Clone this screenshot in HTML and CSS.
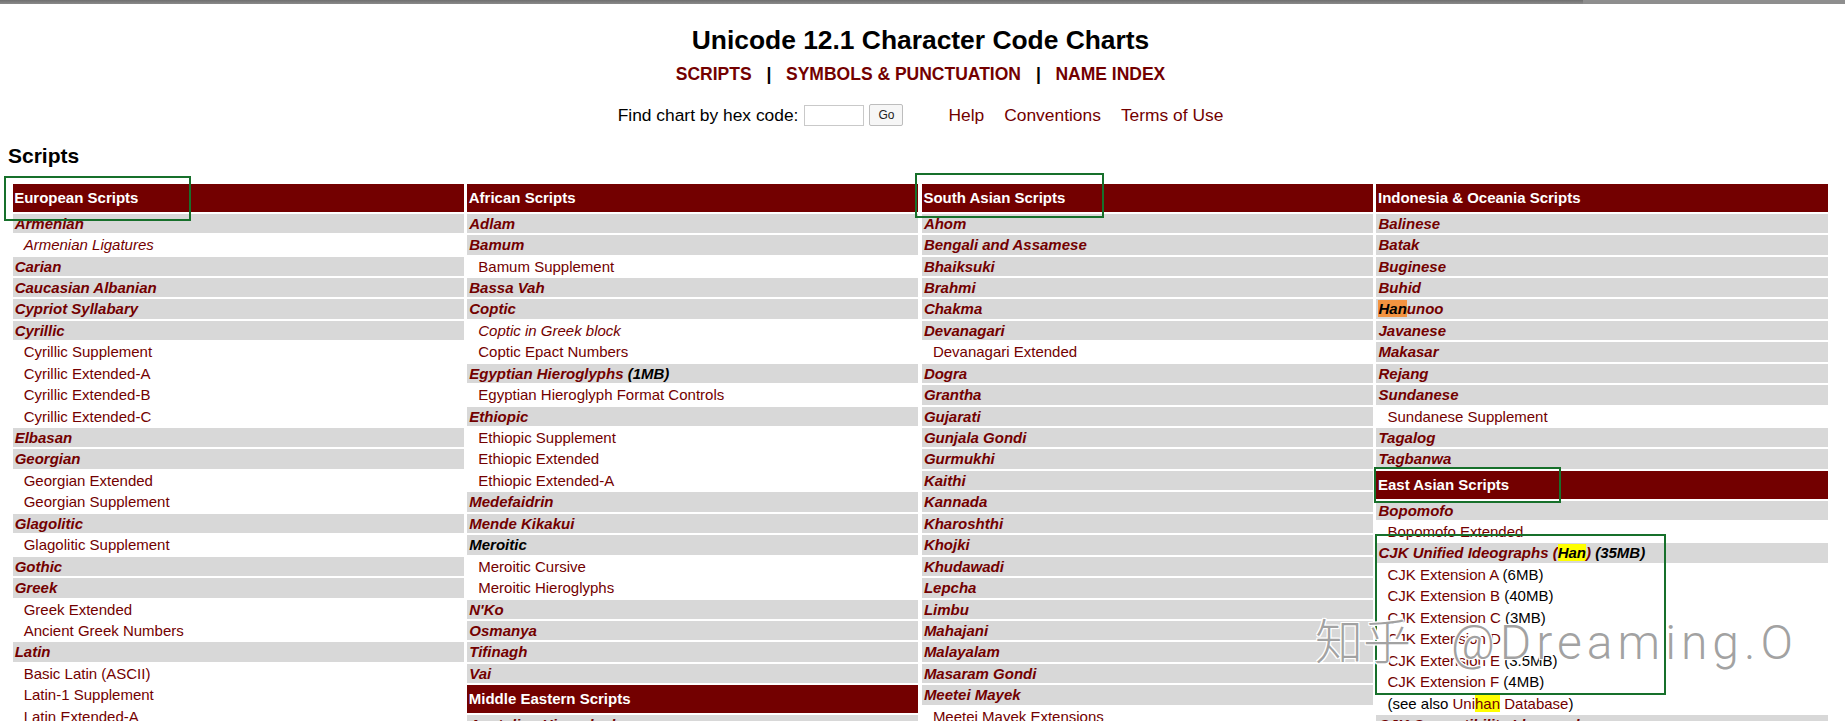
FILE: index.html
```html
<!DOCTYPE html>
<html lang="en">
<head>
<meta charset="utf-8">
<title>Unicode 12.1 Character Code Charts</title>
<link rel="stylesheet" href="styles.css">
</head>
<body>
<div class="topbar"><div class="topbar-dark"></div><div class="topbar-light"></div></div>
<div class="page">
  <h1 class="title">Unicode 12.1 Character Code Charts</h1>
  <nav class="nav">
    <a href="#">SCRIPTS</a><span class="sep">|</span><a href="#">SYMBOLS &amp; PUNCTUATION</a><span class="sep">|</span><a href="#">NAME INDEX</a>
  </nav>
  <div class="find">
    <span class="find-label">Find chart by hex code:</span>
    <span class="find-input"></span>
    <span class="find-go">Go</span>
    <a class="find-link first" href="#">Help</a>
    <a class="find-link" href="#">Conventions</a>
    <a class="find-link" href="#">Terms of Use</a>
  </div>
  <h2 class="section">Scripts</h2>
  <div class="cols">
    <div class="col">
      <div class="hd">European Scripts</div>
      <div class="r g"><a href="#">Armenian</a></div>
      <div class="r s"><a class="it" href="#">Armenian Ligatures</a></div>
      <div class="r g"><a href="#">Carian</a></div>
      <div class="r g"><a href="#">Caucasian Albanian</a></div>
      <div class="r g"><a href="#">Cypriot Syllabary</a></div>
      <div class="r g"><a href="#">Cyrillic</a></div>
      <div class="r s"><a href="#">Cyrillic Supplement</a></div>
      <div class="r s"><a href="#">Cyrillic Extended-A</a></div>
      <div class="r s"><a href="#">Cyrillic Extended-B</a></div>
      <div class="r s"><a href="#">Cyrillic Extended-C</a></div>
      <div class="r g"><a href="#">Elbasan</a></div>
      <div class="r g"><a href="#">Georgian</a></div>
      <div class="r s"><a href="#">Georgian Extended</a></div>
      <div class="r s"><a href="#">Georgian Supplement</a></div>
      <div class="r g"><a href="#">Glagolitic</a></div>
      <div class="r s"><a href="#">Glagolitic Supplement</a></div>
      <div class="r g"><a href="#">Gothic</a></div>
      <div class="r g"><a href="#">Greek</a></div>
      <div class="r s"><a href="#">Greek Extended</a></div>
      <div class="r s"><a href="#">Ancient Greek Numbers</a></div>
      <div class="r g"><a href="#">Latin</a></div>
      <div class="r s"><a href="#">Basic Latin (ASCII)</a></div>
      <div class="r s"><a href="#">Latin-1 Supplement</a></div>
      <div class="r s"><a href="#">Latin Extended-A</a></div>
      <div class="r s"><a href="#">Latin Extended-B</a></div>
    </div>
    <div class="col">
      <div class="hd">African Scripts</div>
      <div class="r g"><a href="#">Adlam</a></div>
      <div class="r g"><a href="#">Bamum</a></div>
      <div class="r s"><a href="#">Bamum Supplement</a></div>
      <div class="r g"><a href="#">Bassa Vah</a></div>
      <div class="r g"><a href="#">Coptic</a></div>
      <div class="r s"><a class="it" href="#">Coptic in Greek block</a></div>
      <div class="r s"><a href="#">Coptic Epact Numbers</a></div>
      <div class="r g"><a href="#">Egyptian Hieroglyphs</a> <span class="note">(1MB)</span></div>
      <div class="r s"><a href="#">Egyptian Hieroglyph Format Controls</a></div>
      <div class="r g"><a href="#">Ethiopic</a></div>
      <div class="r s"><a href="#">Ethiopic Supplement</a></div>
      <div class="r s"><a href="#">Ethiopic Extended</a></div>
      <div class="r s"><a href="#">Ethiopic Extended-A</a></div>
      <div class="r g"><a href="#">Medefaidrin</a></div>
      <div class="r g"><a href="#">Mende Kikakui</a></div>
      <div class="r g"><span class="plain">Meroitic</span></div>
      <div class="r s"><a href="#">Meroitic Cursive</a></div>
      <div class="r s"><a href="#">Meroitic Hieroglyphs</a></div>
      <div class="r g"><a href="#">N'Ko</a></div>
      <div class="r g"><a href="#">Osmanya</a></div>
      <div class="r g"><a href="#">Tifinagh</a></div>
      <div class="r g"><a href="#">Vai</a></div>
      <div class="hd">Middle Eastern Scripts</div>
      <div class="r g"><a href="#">Anatolian Hieroglyphs</a></div>
      <div class="r g"><a href="#">Arabic</a></div>
    </div>
    <div class="col">
      <div class="hd">South Asian Scripts</div>
      <div class="r g"><a href="#">Ahom</a></div>
      <div class="r g"><a href="#">Bengali and Assamese</a></div>
      <div class="r g"><a href="#">Bhaiksuki</a></div>
      <div class="r g"><a href="#">Brahmi</a></div>
      <div class="r g"><a href="#">Chakma</a></div>
      <div class="r g"><a href="#">Devanagari</a></div>
      <div class="r s"><a href="#">Devanagari Extended</a></div>
      <div class="r g"><a href="#">Dogra</a></div>
      <div class="r g"><a href="#">Grantha</a></div>
      <div class="r g"><a href="#">Gujarati</a></div>
      <div class="r g"><a href="#">Gunjala Gondi</a></div>
      <div class="r g"><a href="#">Gurmukhi</a></div>
      <div class="r g"><a href="#">Kaithi</a></div>
      <div class="r g"><a href="#">Kannada</a></div>
      <div class="r g"><a href="#">Kharoshthi</a></div>
      <div class="r g"><a href="#">Khojki</a></div>
      <div class="r g"><a href="#">Khudawadi</a></div>
      <div class="r g"><a href="#">Lepcha</a></div>
      <div class="r g"><a href="#">Limbu</a></div>
      <div class="r g"><a href="#">Mahajani</a></div>
      <div class="r g"><a href="#">Malayalam</a></div>
      <div class="r g"><a href="#">Masaram Gondi</a></div>
      <div class="r g"><a href="#">Meetei Mayek</a></div>
      <div class="r s"><a href="#">Meetei Mayek Extensions</a></div>
      <div class="r g"><a href="#">Modi</a></div>
    </div>
    <div class="col">
      <div class="hd">Indonesia &amp; Oceania Scripts</div>
      <div class="r g"><a href="#">Balinese</a></div>
      <div class="r g"><a href="#">Batak</a></div>
      <div class="r g"><a href="#">Buginese</a></div>
      <div class="r g"><a href="#">Buhid</a></div>
      <div class="r g"><a href="#"><mark class="hl-active">Han</mark>unoo</a></div>
      <div class="r g"><a href="#">Javanese</a></div>
      <div class="r g"><a href="#">Makasar</a></div>
      <div class="r g"><a href="#">Rejang</a></div>
      <div class="r g"><a href="#">Sundanese</a></div>
      <div class="r s"><a href="#">Sundanese Supplement</a></div>
      <div class="r g"><a href="#">Tagalog</a></div>
      <div class="r g"><a href="#">Tagbanwa</a></div>
      <div class="hd">East Asian Scripts</div>
      <div class="r g"><a href="#">Bopomofo</a></div>
      <div class="r s"><a href="#">Bopomofo Extended</a></div>
      <div class="r g"><a href="#">CJK Unified Ideographs (<mark class="hl">Han</mark>)</a> <span class="note">(35MB)</span></div>
      <div class="r s"><a href="#">CJK Extension A</a> <span class="size">(6MB)</span></div>
      <div class="r s"><a href="#">CJK Extension B</a> <span class="size">(40MB)</span></div>
      <div class="r s"><a href="#">CJK Extension C</a> <span class="size">(3MB)</span></div>
      <div class="r s"><a href="#">CJK Extension D</a></div>
      <div class="r s"><a href="#">CJK Extension E</a> <span class="size">(3.5MB)</span></div>
      <div class="r s"><a href="#">CJK Extension F</a> <span class="size">(4MB)</span></div>
      <div class="r s"><span class="size">(see also </span><a href="#">Uni<mark class="hl hl-link">han</mark> Database</a><span class="size">)</span></div>
      <div class="r g"><a href="#">CJK Compatibility Ideographs</a></div>
      <div class="r s"><a href="#">CJK Compatibility Ideographs Supplement</a></div>
    </div>
  </div>
</div>
<div class="box box-eu"></div>
<div class="box box-sa"></div>
<div class="box box-ea"></div>
<div class="box box-cjk"></div>
<div class="watermark"><span class="wm-cn">知乎</span><span class="wm-en">@Dreaming.O</span></div>
</body>
</html>
```

FILE: styles.css
```css
html, body {
  margin: 0;
  padding: 0;
  background: #ffffff;
}
body {
  width: 1845px;
  height: 721px;
  overflow: hidden;
  position: relative;
  font-family: "Liberation Sans", Arial, Helvetica, sans-serif;
  color: #000;
}
a {
  color: #730000;
  text-decoration: none;
}

.topbar {
  display: flex;
  height: 4px;
}
.topbar-dark {
  width: 1583px;
  background: linear-gradient(#6f6f6f, #8a8a8a);
}
.topbar-light {
  flex: 1;
  background: #8e8e8e;
}

.page {
  padding: 0 12px 0 8px;
}

.title {
  margin: 21px 0 0;
  height: 30px;
  line-height: 30px;
  font-size: 26.4px;
  font-weight: bold;
  text-align: center;
}

.nav {
  margin-top: 8px;
  height: 22px;
  line-height: 22px;
  font-size: 17.5px;
  font-weight: bold;
  display: flex;
  justify-content: center;
}
.nav .sep {
  color: #000;
  font-weight: bold;
  margin: 0 14.5px 0 15px;
}

.find {
  margin-top: 18px;
  height: 24px;
  display: flex;
  align-items: center;
  justify-content: center;
  font-size: 17.4px;
  line-height: 24px;
}
.find-label {
  margin-right: 6px;
}
.find-input {
  width: 60px;
  height: 21px;
  box-sizing: border-box;
  border: 1px solid #c9c9c9;
  background: #fff;
  margin-right: 5px;
}
.find-go {
  width: 34px;
  height: 22px;
  box-sizing: border-box;
  border: 1px solid #bdbdbd;
  border-radius: 2px;
  background: #f6f6f6;
  font-size: 12px;
  line-height: 20px;
  text-align: center;
  color: #222;
}
.find-link {
  margin-left: 20px;
}
.find-link.first {
  margin-left: 45px;
}

.section {
  margin: 16.7px 0 0;
  height: 24px;
  line-height: 24px;
  font-size: 21px;
  font-weight: bold;
}

.cols {
  margin: 16.3px 0 0 4.7px;
  width: 1815px;
  display: grid;
  grid-template-columns: repeat(4, 1fr);
  column-gap: 3.4px;
}
.col {
  display: flex;
  flex-direction: column;
  gap: 2px;
  min-width: 0;
}
.hd {
  height: 27.7px;
  line-height: 27.7px;
  background: #730000;
  color: #fff;
  font-size: 15px;
  font-weight: bold;
  padding-left: 1.5px;
  white-space: nowrap;
}
.r {
  height: 19.45px;
  line-height: 19.45px;
  font-size: 15px;
  white-space: nowrap;
  overflow: hidden;
}
.r.g {
  background: #d8d8d8;
  padding-left: 2px;
}
.r.g a,
.r.g .plain,
.r.g .note {
  font-weight: bold;
  font-style: italic;
}
.r.g .plain,
.r.g .note {
  color: #000;
}
.r.s {
  padding-left: 11px;
}
.r.s .it {
  font-style: italic;
}
.size {
  color: #000;
}

mark {
  color: #000;
  padding: 0;
}
.hl {
  background: #ffff00;
}
.hl-link {
  color: #730000;
}
.hl-active {
  background: #f39340;
}

.box {
  position: absolute;
  box-sizing: border-box;
  border: 2px solid #17702b;
}
.box-eu {
  left: 4px;
  top: 176px;
  width: 187px;
  height: 45px;
}
.box-sa {
  left: 915px;
  top: 173px;
  width: 189px;
  height: 45px;
}
.box-ea {
  left: 1374px;
  top: 467px;
  width: 187px;
  height: 36px;
}
.box-cjk {
  left: 1375px;
  top: 534px;
  width: 291px;
  height: 161px;
}

.watermark {
  position: absolute;
  left: 1315px;
  top: 608px;
  height: 60px;
  line-height: 60px;
  display: flex;
  align-items: baseline;
  gap: 40px;
  color: rgba(145, 145, 145, 0.85);
  text-shadow: 0 0 2px #fff, 0 0 2px #fff, 1px 1px 0 #fff, -1px -1px 0 #fff, 1px -1px 0 #fff, -1px 1px 0 #fff;
  white-space: nowrap;
}
.wm-cn {
  font-family: "Noto Sans CJK SC", sans-serif;
  font-weight: 300;
  font-size: 48px;
}
.wm-en {
  font-family: Roboto, "Noto Sans", sans-serif;
  font-weight: 300;
  font-size: 48px;
  letter-spacing: 5px;
}
```
